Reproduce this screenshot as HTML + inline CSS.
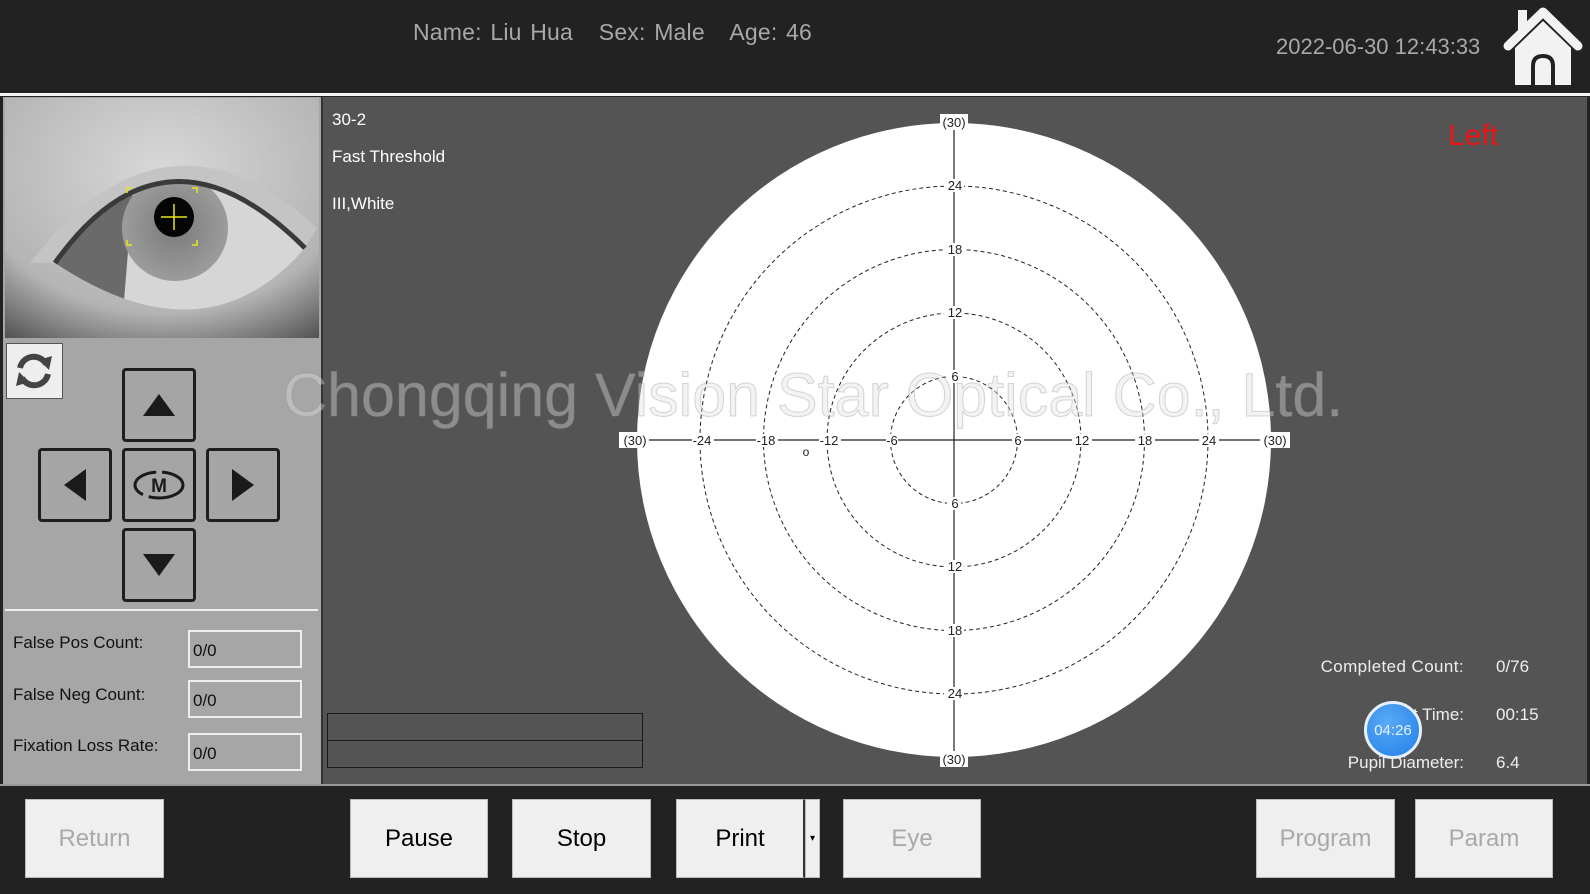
<!DOCTYPE html>
<html><head><meta charset="utf-8"><style>
*{margin:0;padding:0;box-sizing:border-box}
body{width:1590px;height:894px;background:#222;font-family:"Liberation Sans",Arial,sans-serif;position:relative;overflow:hidden}
.a{position:absolute}
.hdr{color:#a8a8a8;font-size:23px;white-space:pre}
.btn{position:absolute;top:799px;height:79px;background:#efefef;border:1px solid #bbb;font-size:24px;display:flex;align-items:center;justify-content:center;color:#000}
.dis{color:#a9a9a9}
.ab{position:absolute;width:74px;height:74px;border:3px solid #1e1e1e;border-radius:4px;background:#a5a5a5;display:flex;align-items:center;justify-content:center}
.lbl{position:absolute;left:13px;font-size:17px;color:#111}
.inp{position:absolute;left:188px;width:114px;height:38px;border:2px solid #eee;background:#a6a6a6;font-size:17px;color:#111;padding:9px 0 0 3px}
.wt{position:absolute;color:#fff;font-size:17px}
.st{position:absolute;color:#eee;font-size:17px}
</style></head><body>
<div class="a hdr" style="left:413px;top:19px;word-spacing:2px;letter-spacing:0.2px">Name: Liu Hua   Sex: Male   Age: 46</div>
<div class="a hdr" style="left:1276px;top:34px;font-size:22px">2022-06-30 12:43:33</div>
<svg class="a" style="left:1500px;top:4px" width="86" height="84" viewBox="0 0 86 84">
<path d="M8 42 L43 8 L78 42" fill="none" stroke="#f2f2f2" stroke-width="9" stroke-linecap="round" stroke-linejoin="round"/>
<rect x="18" y="6" width="9" height="20" fill="#f2f2f2"/>
<path d="M15 44 L43 17 L71 44 L71 81 L15 81 Z" fill="#f2f2f2"/>
<path d="M33 81 L33 62 Q33 52 43 52 Q53 52 53 62 L53 81" fill="none" stroke="#222" stroke-width="4"/>
</svg>
<div class="a" style="left:0;top:93px;width:1590px;height:3px;background:#f5f5f5"></div>
<!-- left panel -->
<div class="a" style="left:3px;top:97px;width:318px;height:687px;background:#a6a6a6"></div>
<svg class="a" style="left:5px;top:98px" width="314" height="240" viewBox="0 0 314 240">
<defs>
<radialGradient id="bg" cx="0.5" cy="0.3" r="0.85"><stop offset="0" stop-color="#d8d8d8"/><stop offset="0.7" stop-color="#b4b4b4"/><stop offset="1" stop-color="#555"/></radialGradient>
<radialGradient id="ir" cx="0.5" cy="0.5" r="0.5"><stop offset="0" stop-color="#7a7a7a"/><stop offset="1" stop-color="#9c9c9c"/></radialGradient>
<clipPath id="op"><path d="M50 165 Q160 10 300 150 Q200 265 50 165Z"/></clipPath>
</defs>
<rect width="314" height="240" fill="url(#bg)"/>
<path d="M25 165 Q160 -10 312 130 L300 150 Q160 10 50 165Z" fill="#c4c4c4"/>
<path d="M50 165 Q160 10 300 150 Q200 265 50 165Z" fill="#d6d6d6"/>
<g clip-path="url(#op)">
<path d="M50 165 Q80 110 128 92 L118 215Z" fill="#6a6a6a"/>
<circle cx="170" cy="130" r="53" fill="url(#ir)"/>
<circle cx="169" cy="119" r="20" fill="#050505"/>
</g>
<path d="M50 165 Q160 10 300 150" fill="none" stroke="#3a3a3a" stroke-width="5"/>
<path d="M156 119 H182 M169 106 V132" stroke="#e6e619" stroke-width="1.5"/>
<path d="M122 95 V90 H127 M187 90 H192 V95 M122 142 V147 H127 M187 147 H192 V142" fill="none" stroke="#e6e619" stroke-width="1.5"/>
</svg>
<div class="a" style="left:6px;top:343px;width:57px;height:56px;background:#eee;border:1px solid #555"></div>
<svg class="a" style="left:12px;top:350px" width="44" height="42" viewBox="0 0 44 42">
<path d="M8 18 A14 14 0 0 1 34 14" fill="none" stroke="#444" stroke-width="6"/>
<path d="M27 10 L40 6 L37 20Z" fill="#444"/>
<path d="M36 24 A14 14 0 0 1 10 28" fill="none" stroke="#444" stroke-width="6"/>
<path d="M17 32 L4 36 L7 22Z" fill="#444"/>
</svg>
<div class="ab" style="left:122px;top:368px"><svg width="34" height="26"><path d="M17 2 L33 24 H1Z" fill="#1a1a1a"/></svg></div>
<div class="ab" style="left:38px;top:448px"><svg width="26" height="34"><path d="M2 17 L24 1 V33Z" fill="#1a1a1a"/></svg></div>
<div class="ab" style="left:122px;top:448px"><svg width="56" height="36" viewBox="0 0 56 36"><ellipse cx="28" cy="18" rx="24" ry="13" fill="none" stroke="#1a1a1a" stroke-width="3" stroke-dasharray="40 6"/><text x="28" y="25" font-size="19" font-weight="bold" text-anchor="middle" fill="#1a1a1a" font-family="Liberation Sans">M</text></svg></div>
<div class="ab" style="left:206px;top:448px"><svg width="26" height="34"><path d="M24 17 L2 1 V33Z" fill="#1a1a1a"/></svg></div>
<div class="ab" style="left:122px;top:528px"><svg width="34" height="26"><path d="M17 24 L33 2 H1Z" fill="#1a1a1a"/></svg></div>
<div class="a" style="left:5px;top:609px;width:313px;height:2px;background:#eee"></div>
<div class="lbl" style="top:633px">False Pos Count:</div>
<div class="lbl" style="top:685px">False Neg Count:</div>
<div class="lbl" style="top:736px">Fixation Loss Rate:</div>
<div class="inp" style="top:630px">0/0</div>
<div class="inp" style="top:680px">0/0</div>
<div class="inp" style="top:733px">0/0</div>
<!-- main -->
<div class="a" style="left:321px;top:97px;width:1266px;height:687px;background:#545454;border-left:2px solid #333"></div>
<svg class="a" style="left:0;top:0" width="1590" height="894">
<circle cx="954" cy="440" r="317" fill="#fff"/>
<g fill="none" stroke="#222" stroke-width="1" stroke-dasharray="4 3">
<circle cx="954" cy="440" r="63.5"/><circle cx="954" cy="440" r="127"/><circle cx="954" cy="440" r="190.5"/><circle cx="954" cy="440" r="254"/>
</g>
<path d="M954 123 V757 M637 440 H1271" stroke="#222" stroke-width="1.2"/>
<g font-family="Liberation Sans" font-size="13" fill="#222" text-anchor="middle">
<rect x="940" y="114" width="28" height="16" fill="#fff"/><text x="954" y="127">(30)</text>
<rect x="940" y="751" width="28" height="16" fill="#fff"/><text x="954" y="764">(30)</text>
<rect x="619" y="432" width="30" height="16" fill="#fff"/><text x="635" y="445">(30)</text>
<rect x="1260" y="432" width="30" height="16" fill="#fff"/><text x="1275" y="445">(30)</text>
<g>
<rect x="944" y="179" width="20" height="13" fill="#fff"/><text x="955" y="190">24</text>
<rect x="944" y="243" width="20" height="13" fill="#fff"/><text x="955" y="254">18</text>
<rect x="944" y="306" width="20" height="13" fill="#fff"/><text x="955" y="317">12</text>
<rect x="947" y="370" width="14" height="13" fill="#fff"/><text x="955" y="381">6</text>
<rect x="947" y="497" width="14" height="13" fill="#fff"/><text x="955" y="508">6</text>
<rect x="944" y="560" width="20" height="13" fill="#fff"/><text x="955" y="571">12</text>
<rect x="944" y="624" width="20" height="13" fill="#fff"/><text x="955" y="635">18</text>
<rect x="944" y="687" width="20" height="13" fill="#fff"/><text x="955" y="698">24</text>
<rect x="692" y="434" width="22" height="13" fill="#fff"/><text x="702" y="445">-24</text>
<rect x="756" y="434" width="22" height="13" fill="#fff"/><text x="766" y="445">-18</text>
<rect x="819" y="434" width="22" height="13" fill="#fff"/><text x="829" y="445">-12</text>
<rect x="886" y="434" width="12" height="13" fill="#fff"/><text x="892" y="445">-6</text>
<rect x="1012" y="434" width="12" height="13" fill="#fff"/><text x="1018" y="445">6</text>
<rect x="1072" y="434" width="20" height="13" fill="#fff"/><text x="1082" y="445">12</text>
<rect x="1135" y="434" width="20" height="13" fill="#fff"/><text x="1145" y="445">18</text>
<rect x="1199" y="434" width="20" height="13" fill="#fff"/><text x="1209" y="445">24</text>
</g>
<text x="806" y="456" font-size="12">o</text>
</g>
</svg>
<div class="wt" style="left:332px;top:110px">30-2</div>
<div class="wt" style="left:332px;top:147px">Fast Threshold</div>
<div class="wt" style="left:332px;top:194px">III,White</div>
<div class="a" style="left:1448px;top:119px;color:#f01414;font-size:30px">Left</div>
<div class="a" style="left:327px;top:713px;width:316px;height:55px;border:1px solid #1a1a1a"></div>
<div class="a" style="left:327px;top:740px;width:316px;height:1px;background:#1a1a1a"></div>
<div class="st" style="right:126px;top:657px;letter-spacing:0.4px">Completed Count:</div>
<div class="st" style="right:126px;top:705px">Test Time:</div>
<div class="st" style="right:126px;top:753px">Pupil Diameter:</div>
<div class="st" style="left:1496px;top:657px">0/76</div>
<div class="st" style="left:1496px;top:705px">00:15</div>
<div class="st" style="left:1496px;top:753px">6.4</div>
<div class="a" style="left:1364px;top:701px;width:58px;height:58px;border-radius:50%;background:radial-gradient(circle at 40% 35%,#5aaaf5,#1f7fe8);border:3px solid #e8f0ff;color:#e6f2ff;font-size:15px;display:flex;align-items:center;justify-content:center">04:26</div>
<div class="a" style="left:283px;top:360px;font-size:61px;color:rgba(225,225,225,0.4);white-space:nowrap;-webkit-text-stroke:1px rgba(140,140,140,0.35)">Chongqing Vision Star Optical Co., Ltd.</div>
<!-- bottom -->
<div class="a" style="left:0;top:784px;width:1590px;height:2px;background:#999"></div>
<div class="btn dis" style="left:25px;width:139px">Return</div>
<div class="btn" style="left:350px;width:138px">Pause</div>
<div class="btn" style="left:512px;width:139px">Stop</div>
<div class="btn" style="left:676px;width:129px;border-right:2px solid #333">Print</div>
<div class="btn" style="left:805px;width:15px;font-size:10px">▾</div>
<div class="btn dis" style="left:843px;width:138px">Eye</div>
<div class="btn dis" style="left:1256px;width:139px">Program</div>
<div class="btn dis" style="left:1415px;width:138px">Param</div>
</body></html>
